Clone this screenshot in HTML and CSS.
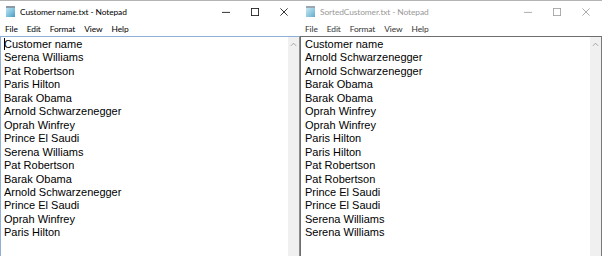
FILE: index.html
```html
<!DOCTYPE html>
<html lang="en">

<head>
    <meta charset="UTF-8">
    <title>Notepad windows</title>
    <link rel="stylesheet" href="styles.css">
</head>

<body>
    <div class="desktop">
        <div class="window active">
            <div class="titlebar">
                <span class="app-icon"></span>
                <span class="title">Customer name.txt - Notepad</span>
                <div class="controls">
                    <svg class="ctrl" viewBox="0 0 10 10"><path d="M0 5.5h10" /></svg>
                    <svg class="ctrl" viewBox="0 0 10 10"><rect x="0.5" y="0.5" width="9" height="9" /></svg>
                    <svg class="ctrl" viewBox="0 0 10 10"><path d="M0.5 0.5l9 9M9.5 0.5l-9 9" /></svg>
                </div>
            </div>
            <div class="menubar">
                <span>File</span><span>Edit</span><span>Format</span><span>View</span><span>Help</span>
            </div>
            <div class="editor">
                <div class="text"><span class="caret"></span>Customer name
Serena Williams
Pat Robertson
Paris Hilton
Barak Obama
Arnold Schwarzenegger
Oprah Winfrey
Prince El Saudi
Serena Williams
Pat Robertson
Barak Obama
Arnold Schwarzenegger
Prince El Saudi
Oprah Winfrey
Paris Hilton</div>
                <div class="scrollbar">
                    <svg class="arrow" viewBox="0 0 8 5"><path d="M1 4l3-3 3 3" /></svg>
                </div>
            </div>
        </div>

        <div class="window inactive">
            <div class="titlebar">
                <span class="app-icon"></span>
                <span class="title">SortedCustomer.txt - Notepad</span>
                <div class="controls">
                    <svg class="ctrl" viewBox="0 0 10 10"><path d="M0 5.5h10" /></svg>
                    <svg class="ctrl" viewBox="0 0 10 10"><rect x="0.5" y="0.5" width="9" height="9" /></svg>
                    <svg class="ctrl" viewBox="0 0 10 10"><path d="M0.5 0.5l9 9M9.5 0.5l-9 9" /></svg>
                </div>
            </div>
            <div class="menubar">
                <span>File</span><span>Edit</span><span>Format</span><span>View</span><span>Help</span>
            </div>
            <div class="editor">
                <div class="text">Customer name
Arnold Schwarzenegger
Arnold Schwarzenegger
Barak Obama
Barak Obama
Oprah Winfrey
Oprah Winfrey
Paris Hilton
Paris Hilton
Pat Robertson
Pat Robertson
Prince El Saudi
Prince El Saudi
Serena Williams
Serena Williams</div>
                <div class="scrollbar">
                    <svg class="arrow" viewBox="0 0 8 5"><path d="M1 4l3-3 3 3" /></svg>
                </div>
            </div>
        </div>
    </div>
</body>

</html>
```

FILE: styles.css
```css
:root {
    --ui-font: Lato, "Open Sans", sans-serif;
    --text-font: "Liberation Sans", Arial, sans-serif;
    --frame-top: #b4b4b4;
    --scroll-bg: #f0f0f0;
    --active-edge: #8fb0d6;
    --inactive-edge: #6e6e6e;
}

body {
    margin: 0;
    background: #ffffff;
}

.desktop {
    display: flex;
    width: 602px;
    height: 256px;
    overflow: hidden;
    border-top: 1px solid var(--frame-top);
    box-sizing: border-box;
}

.window {
    display: flex;
    flex-direction: column;
    height: 100%;
    background: #ffffff;
}

.window.active {
    width: 300px;
}

.window.inactive {
    width: 302px;
}

.titlebar {
    display: flex;
    align-items: center;
    height: 21px;
    padding-left: 6px;
    font-family: var(--ui-font);
    font-size: 8.4px;
    letter-spacing: -0.1px;
    color: #000000;
}

.inactive .titlebar {
    color: #9a9a9a;
}

.app-icon {
    width: 9px;
    height: 11px;
    margin-right: 5px;
    border-top: 2px solid #8a9aa6;
    background: linear-gradient(135deg, #bfe3f0 0%, #7cc1dc 55%, #4c97bd 100%);
    box-sizing: border-box;
}

.inactive .app-icon {
    opacity: 0.85;
}

.title {
    flex: 1;
    white-space: nowrap;
}

.controls {
    display: flex;
    align-items: center;
    gap: 21px;
    margin-right: 12px;
}

.ctrl {
    width: 8px;
    height: 8px;
    fill: none;
    stroke: #1a1a1a;
    stroke-width: 1.1;
}

.inactive .ctrl {
    stroke: #a0a0a0;
}

.menubar {
    display: flex;
    gap: 9px;
    height: 14px;
    align-items: center;
    padding-left: 5px;
    font-family: var(--ui-font);
    font-size: 8.4px;
    letter-spacing: -0.1px;
    color: #000000;
}

.inactive .menubar {
    color: #333333;
}

.editor {
    flex: 1;
    display: flex;
    min-height: 0;
    border-top: 1px solid var(--active-edge);
    border-left: 1px solid var(--active-edge);
    border-right: 1px solid #8a8a8a;
}

.inactive .editor {
    border-top-color: var(--inactive-edge);
    border-left-color: var(--inactive-edge);
    border-right-color: #7a7a7a;
}

.text {
    flex: 1;
    padding: 1px 0 0 3px;
    font-family: var(--text-font);
    font-size: 11px;
    line-height: 13.45px;
    color: #000000;
    white-space: pre;
    overflow: hidden;
}

.inactive .text {
    padding-left: 4px;
}

.caret {
    display: inline-block;
    width: 1px;
    height: 12px;
    margin-right: -1px;
    vertical-align: -2px;
    background: #000000;
}

.scrollbar {
    width: 11px;
    background: var(--scroll-bg);
    display: flex;
    justify-content: center;
    padding-top: 5px;
}

.arrow {
    width: 7px;
    height: 5px;
    fill: none;
    stroke: #9a9a9a;
    stroke-width: 1;
}
```
